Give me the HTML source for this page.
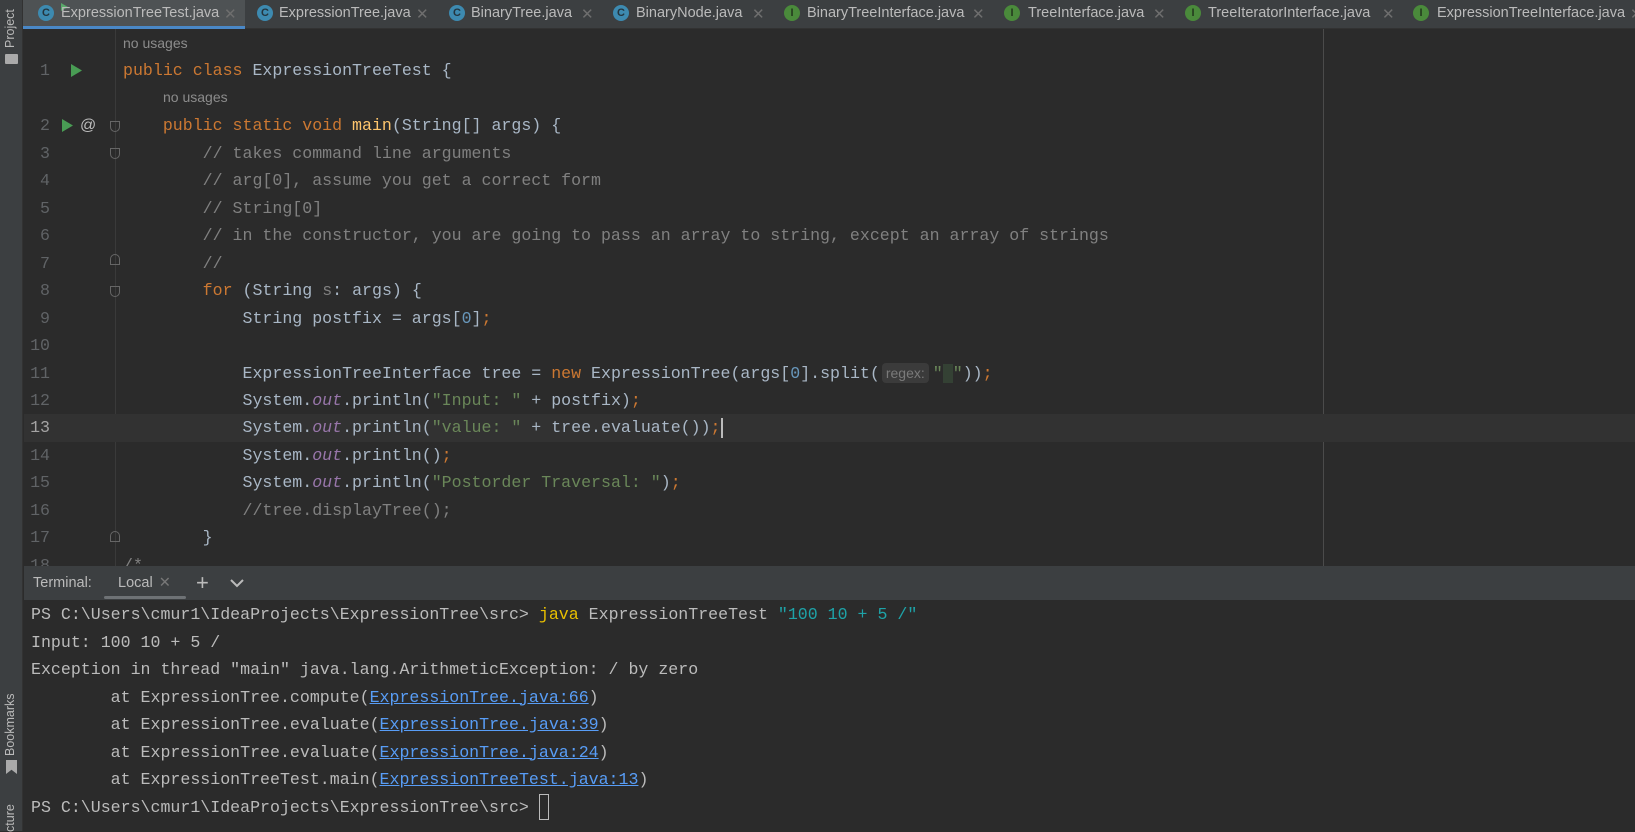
<!DOCTYPE html>
<html><head><meta charset="utf-8"><style>
*{margin:0;padding:0;box-sizing:border-box}
body{width:1635px;height:831px;background:#2b2b2b;overflow:hidden;position:relative;font-family:"Liberation Mono",monospace;font-size:16.6px;color:#a9b7c6}
.abs{position:absolute}
#strip{left:0;top:0;width:23px;height:831px;background:#3c3f41;border-right:1px solid #323232}
#tabs{left:23px;top:0;right:0;height:29px;background:#3c3f41;border-bottom:1px solid #323232;font-family:"Liberation Sans",sans-serif;font-size:14.5px;color:#bbbbbb}
.tab{position:absolute;top:0;height:29px;line-height:26px;white-space:nowrap}
.ic{position:absolute;top:5px;width:16px;height:16px;border-radius:50%;font-size:11px;line-height:16px;text-align:center;font-weight:bold}
.c{background:#3d8ab0;color:#24353f}
.i{background:#4a8a3b;color:#233a1e}
.x{position:absolute;top:0;color:#6e6e6e;font-size:15px}
.ln{position:absolute;left:0;width:50px;text-align:right;color:#606366;height:27.5px;line-height:27.5px}
.cl{position:absolute;left:123px;height:27.5px;line-height:27.5px;white-space:pre}
.k{color:#cc7832}.s{color:#6a8759}.cm{color:#808080}.f{color:#9876aa;font-style:italic}.m{color:#ffc66d}.n{color:#6897bb}
.nu{position:absolute;font-family:"Liberation Sans",sans-serif;font-size:14px;color:#8c8c8c}
.tl{position:absolute;left:31px;height:27.4px;line-height:27.4px;white-space:pre;color:#bbbbbb}
.lk{color:#589df6;text-decoration:underline}
</style></head><body>
<div class="abs" id="strip"></div>
<div class="abs" style="left:3px;top:4px;width:16px;height:48px;"><div style="transform:rotate(-90deg);transform-origin:left top;position:absolute;left:0;top:44px;font-family:'Liberation Sans',sans-serif;font-size:12.5px;color:#bbb;white-space:nowrap">Project</div></div>
<div class="abs" style="left:5px;top:54px;width:13px;height:10px;background:#aaa;border-radius:1px"></div>
<div class="abs" style="left:3px;top:690px;"><div style="transform:rotate(-90deg);transform-origin:left top;position:absolute;left:0;top:66px;font-family:'Liberation Sans',sans-serif;font-size:12.5px;color:#bbb;white-space:nowrap">Bookmarks</div></div>
<div class="abs" style="left:6px;top:760px;width:11px;height:14px;background:#aaa;clip-path:polygon(0 0,100% 0,100% 100%,50% 70%,0 100%)"></div>
<div class="abs" style="left:3px;top:798px;"><div style="transform:rotate(-90deg);transform-origin:left top;position:absolute;left:0;top:34px;font-family:'Liberation Sans',sans-serif;font-size:12.5px;color:#bbb;white-space:nowrap">cture</div></div>

<div class="abs" id="tabs">
<div class="tab" style="left:0;width:222px;background:#4e5254;border-bottom:3px solid #4a88c7;height:29px"></div>
<div class="tab" style="left:15px"><span class="ic c">C</span><span style="position:absolute;left:23px;top:3px;width:7px;height:8px;background:#59a869;clip-path:polygon(0 0,100% 50%,0 100%)"></span></div>
<div class="tab" style="left:38px">ExpressionTreeTest.java</div><div class="x" style="left:201px;top:5px">✕</div>
<div class="tab" style="left:234px"><span class="ic c">C</span></div><div class="tab" style="left:256px">ExpressionTree.java</div><div class="x" style="left:393px;top:5px">✕</div>
<div class="tab" style="left:426px"><span class="ic c">C</span></div><div class="tab" style="left:448px">BinaryTree.java</div><div class="x" style="left:558px;top:5px">✕</div>
<div class="tab" style="left:590px"><span class="ic c">C</span></div><div class="tab" style="left:613px">BinaryNode.java</div><div class="x" style="left:729px;top:5px">✕</div>
<div class="tab" style="left:761px"><span class="ic i">I</span></div><div class="tab" style="left:784px">BinaryTreeInterface.java</div><div class="x" style="left:949px;top:5px">✕</div>
<div class="tab" style="left:981px"><span class="ic i">I</span></div><div class="tab" style="left:1005px">TreeInterface.java</div><div class="x" style="left:1130px;top:5px">✕</div>
<div class="tab" style="left:1162px"><span class="ic i">I</span></div><div class="tab" style="left:1185px">TreeIteratorInterface.java</div><div class="x" style="left:1359px;top:5px">✕</div>
<div class="tab" style="left:1390px"><span class="ic i">I</span></div><div class="tab" style="left:1414px">ExpressionTreeInterface.java</div><div class="x" style="left:1607px;top:5px">✕</div>
</div>

<!-- editor -->
<div class="abs" style="left:115px;top:29px;width:1px;height:537px;background:#3a3a3a"></div>
<div class="abs" style="left:1323px;top:29px;width:1px;height:537px;background:#4b4b4b"></div>
<div class="abs" style="left:24px;top:414px;width:1611px;height:27.5px;background:#323232"></div>

<div class="nu" style="left:123px;top:35px">no usages</div>
<div class="nu" style="left:163px;top:89px">no usages</div>

<div class="ln" style="top:57px">1</div>
<div class="abs" style="left:71px;top:64px;width:11px;height:13px;background:#499c54;clip-path:polygon(0 0,100% 50%,0 100%)"></div>
<div class="cl" style="top:57px"><span class="k">public class </span>ExpressionTreeTest {</div>

<div class="ln" style="top:112px">2</div>
<div class="abs" style="left:62px;top:119px;width:11px;height:13px;background:#499c54;clip-path:polygon(0 0,100% 50%,0 100%)"></div>
<div class="abs" style="left:80px;top:112px;line-height:27.5px;color:#bbb;font-family:'Liberation Sans',sans-serif;font-size:16px">@</div>
<div class="cl" style="top:112px">    <span class="k">public static void </span><span class="m">main</span>(String[] args) {</div>

<div class="ln" style="top:139.5px">3</div><div class="cl cm" style="top:139.5px">        // takes command line arguments</div>
<div class="ln" style="top:167px">4</div><div class="cl cm" style="top:167px">        // arg[0], assume you get a correct form</div>
<div class="ln" style="top:194.5px">5</div><div class="cl cm" style="top:194.5px">        // String[0]</div>
<div class="ln" style="top:222px">6</div><div class="cl cm" style="top:222px">        // in the constructor, you are going to pass an array to string, except an array of strings</div>
<div class="ln" style="top:249.5px">7</div><div class="cl cm" style="top:249.5px">        //</div>
<div class="ln" style="top:277px">8</div><div class="cl" style="top:277px">        <span class="k">for </span>(String <span style="color:#808080">s</span>: args) {</div>
<div class="ln" style="top:304.5px">9</div><div class="cl" style="top:304.5px">            String postfix = args[<span class="n">0</span>]<span class="k">;</span></div>
<div class="ln" style="top:332px">10</div>
<div class="ln" style="top:359.5px">11</div><div class="cl" style="top:359.5px">            ExpressionTreeInterface tree = <span class="k">new </span>ExpressionTree(args[<span class="n">0</span>].split(<span style="display:inline-block;background:#3b3b3b;color:#7a7a7a;font-family:'Liberation Sans',sans-serif;font-size:14px;border-radius:4px;padding:0 4px;line-height:20px;margin:0 4px 0 2px">regex:</span><span class="s">"<span style="background:#344134"> </span>"</span>))<span class="k">;</span></div>
<div class="ln" style="top:387px">12</div><div class="cl" style="top:387px">            System.<span class="f">out</span>.println(<span class="s">"Input: "</span> + postfix)<span class="k">;</span></div>
<div class="ln" style="top:414px;color:#a4a3a3">13</div><div class="cl" style="top:414px">            System.<span class="f">out</span>.println(<span class="s">"value: "</span> + tree.evaluate())<span class="k">;</span><span style="display:inline-block;width:2px;height:20px;background:#bbb;vertical-align:middle"></span></div>
<div class="ln" style="top:441.5px">14</div><div class="cl" style="top:441.5px">            System.<span class="f">out</span>.println()<span class="k">;</span></div>
<div class="ln" style="top:469px">15</div><div class="cl" style="top:469px">            System.<span class="f">out</span>.println(<span class="s">"Postorder Traversal: "</span>)<span class="k">;</span></div>
<div class="ln" style="top:496.5px">16</div><div class="cl cm" style="top:496.5px">            //tree.displayTree();</div>
<div class="ln" style="top:524px">17</div><div class="cl" style="top:524px">        }</div>
<div class="ln" style="top:551.5px">18</div><div class="cl cm" style="top:551.5px">/*</div>

<!-- fold markers -->
<div class="abs" style="left:110px;top:121px;width:10px;height:11px;border:1px solid #666;border-radius:0 0 5px 5px"></div>
<div class="abs" style="left:110px;top:148px;width:10px;height:11px;border:1px solid #666;border-radius:0 0 5px 5px"></div>
<div class="abs" style="left:110px;top:254px;width:10px;height:11px;border:1px solid #666;border-radius:5px 5px 0 0"></div>
<div class="abs" style="left:110px;top:286px;width:10px;height:11px;border:1px solid #666;border-radius:0 0 5px 5px"></div>
<div class="abs" style="left:110px;top:531px;width:10px;height:11px;border:1px solid #666;border-radius:5px 5px 0 0"></div>

<!-- terminal -->
<div class="abs" style="left:24px;top:566px;width:1611px;height:265px;background:#2b2b2b;border-top:1px solid #323232"></div>
<div class="abs" style="left:24px;top:566px;width:1611px;height:34px;background:#3c3f41"></div>
<div class="abs" style="left:33px;top:566px;height:34px;line-height:34px;font-family:'Liberation Sans',sans-serif;font-size:14.5px;color:#bbb">Terminal:</div>
<div class="abs" style="left:118px;top:566px;height:34px;line-height:34px;font-family:'Liberation Sans',sans-serif;font-size:14.5px;color:#bbb">Local <span style="color:#777;margin-left:2px">✕</span></div>
<div class="abs" style="left:104px;top:596px;width:82px;height:3px;background:#6e7275;border-radius:2px"></div>
<div class="abs" style="left:196px;top:566px;height:34px;line-height:33px;font-family:'Liberation Sans',sans-serif;font-size:22px;color:#bbb">+</div>
<svg class="abs" style="left:229px;top:577px" width="16" height="12"><path d="M2 3 L8 9 L14 3" stroke="#bbb" stroke-width="2" fill="none"/></svg>

<div class="tl" style="top:601px">PS C:\Users\cmur1\IdeaProjects\ExpressionTree\src&gt; <span style="color:#e8bf00">java</span> ExpressionTreeTest <span style="color:#1ea3a8">"100 10 + 5 /"</span></div>
<div class="tl" style="top:628.5px">Input: 100 10 + 5 /</div>
<div class="tl" style="top:656px">Exception in thread "main" java.lang.ArithmeticException: / by zero</div>
<div class="tl" style="top:683.5px">        at ExpressionTree.compute(<span class="lk">ExpressionTree.java:66</span>)</div>
<div class="tl" style="top:711px">        at ExpressionTree.evaluate(<span class="lk">ExpressionTree.java:39</span>)</div>
<div class="tl" style="top:738.5px">        at ExpressionTree.evaluate(<span class="lk">ExpressionTree.java:24</span>)</div>
<div class="tl" style="top:766px">        at ExpressionTreeTest.main(<span class="lk">ExpressionTreeTest.java:13</span>)</div>
<div class="tl" style="top:793.5px">PS C:\Users\cmur1\IdeaProjects\ExpressionTree\src&gt; <span style="display:inline-block;width:10px;height:26px;border:1px solid #bbb;vertical-align:middle"></span></div>
</body></html>
